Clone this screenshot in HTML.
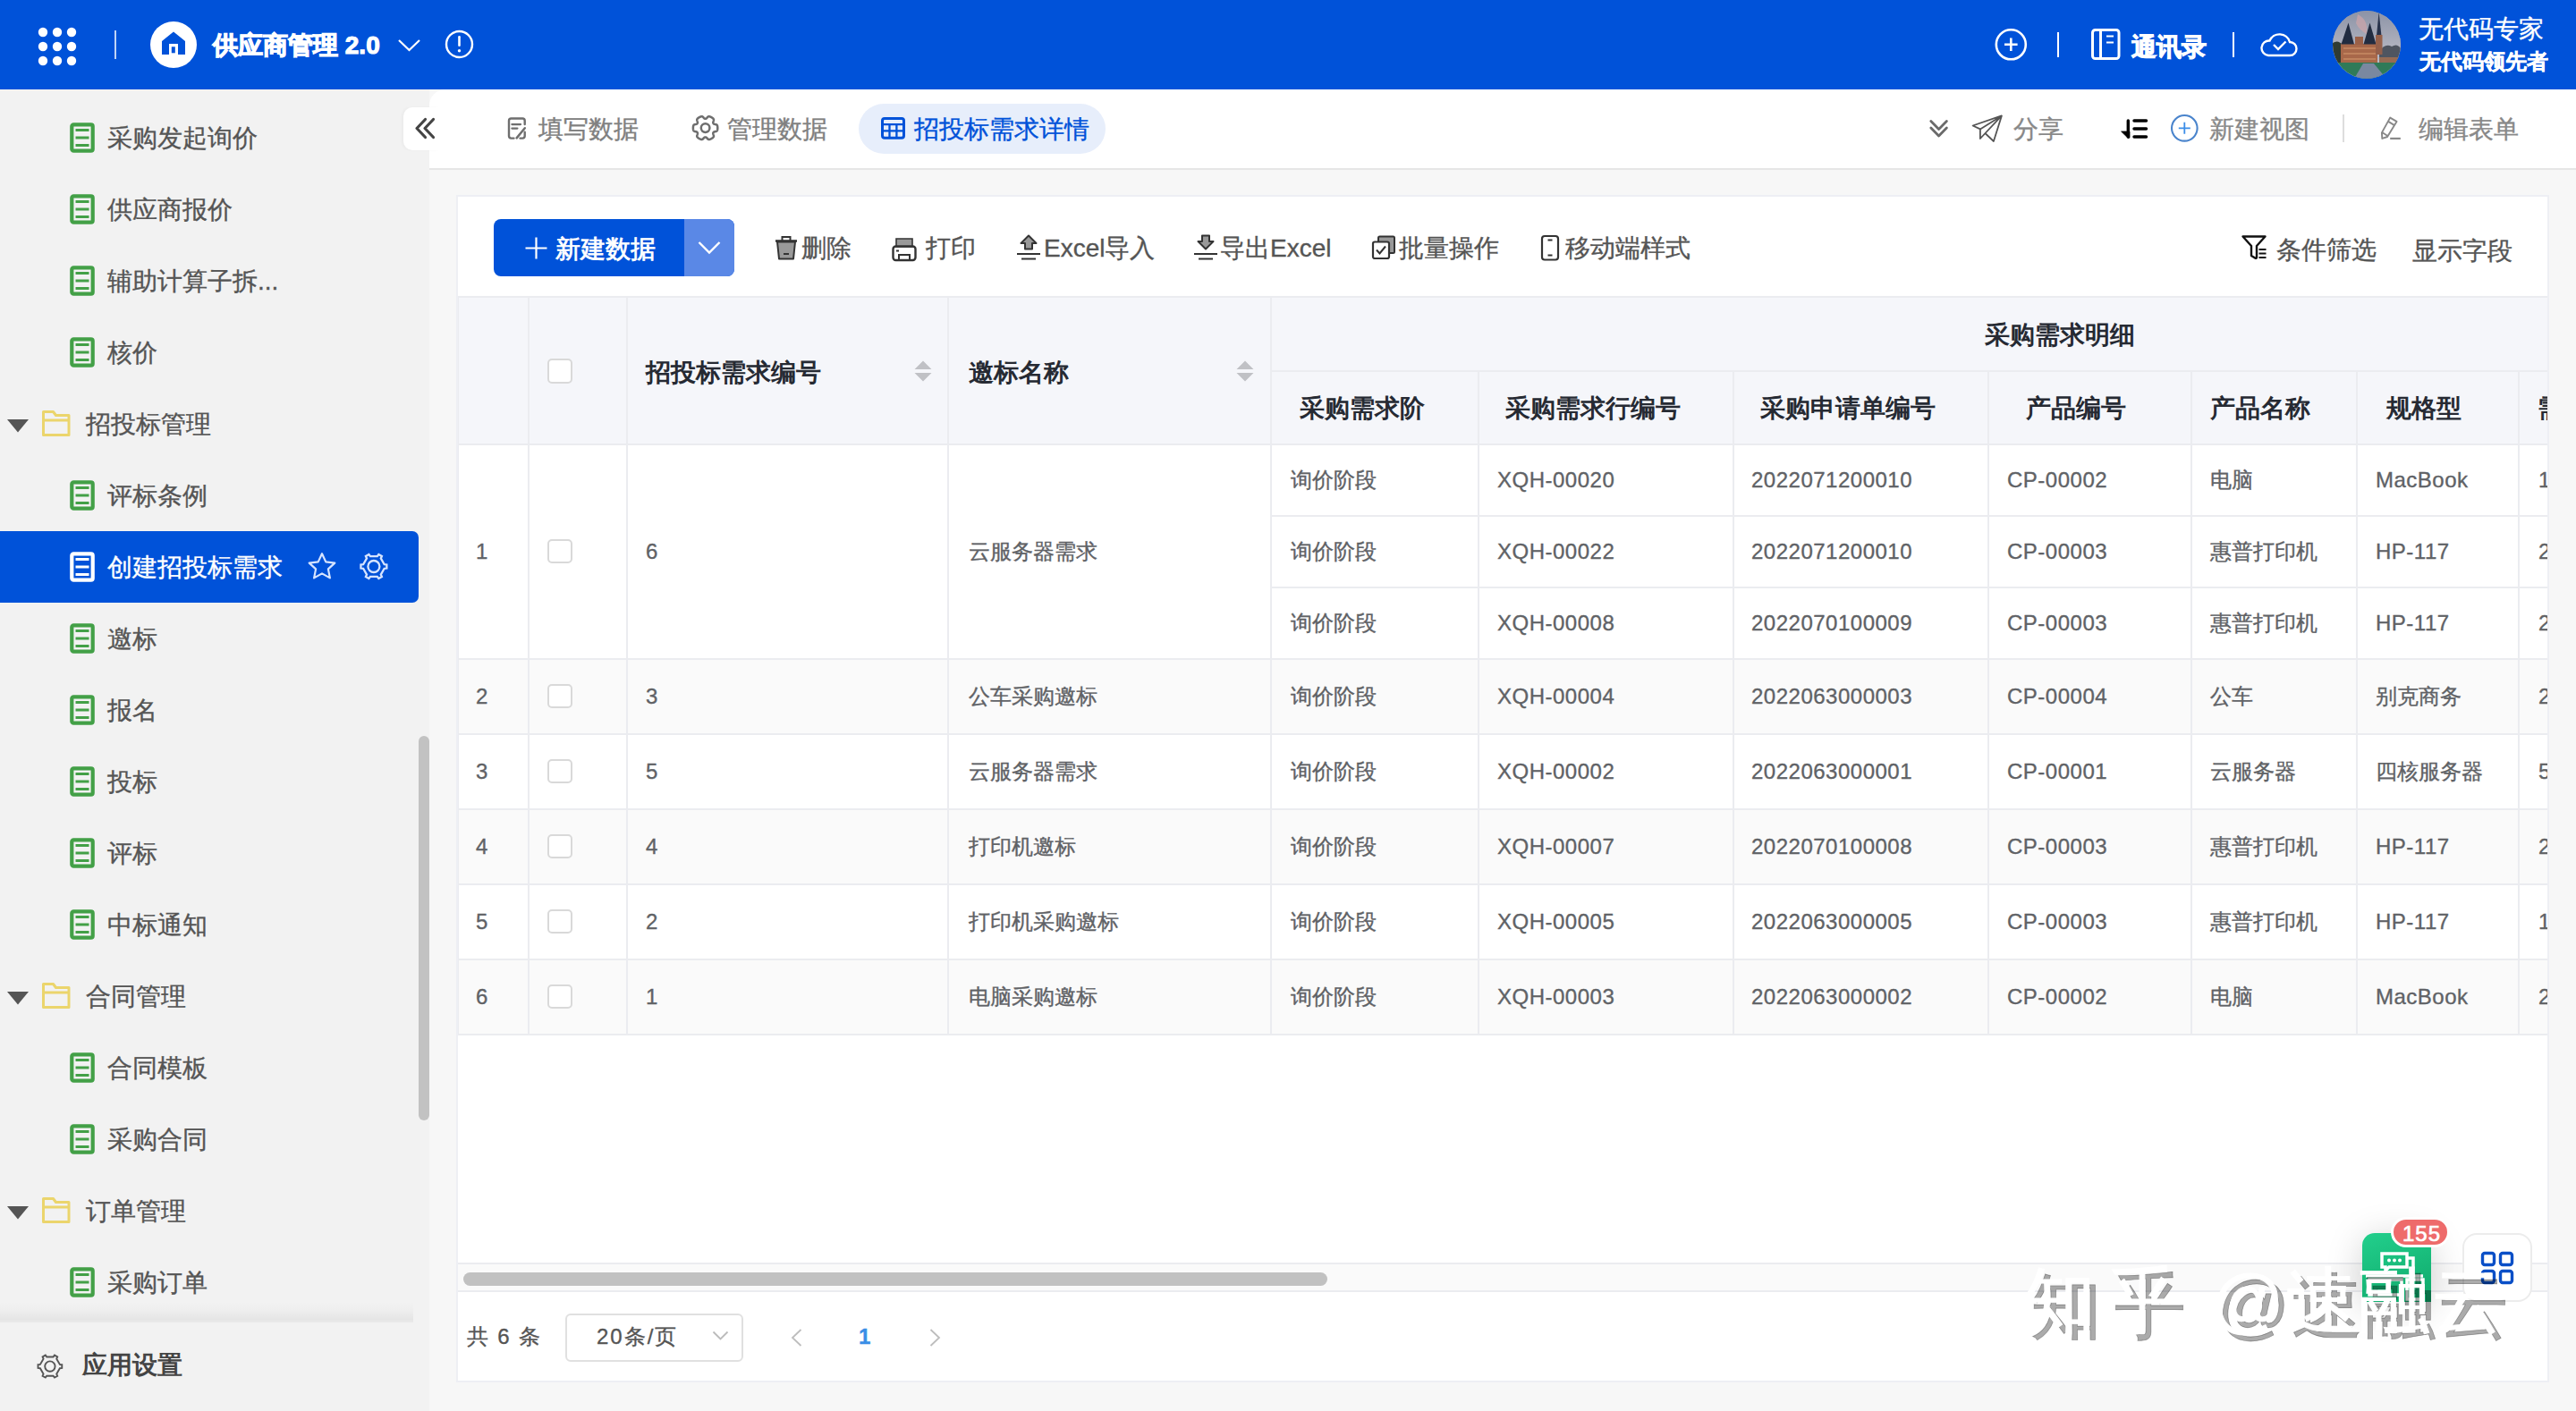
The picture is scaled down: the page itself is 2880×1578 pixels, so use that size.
<!DOCTYPE html>
<html><head><meta charset="utf-8">
<style>
*{box-sizing:border-box;margin:0;padding:0}
html,body{width:2880px;height:1578px;overflow:hidden}
body{position:relative;background:#f7f7f7;font-family:"Liberation Sans",sans-serif;color:#555}
.a{position:absolute}
.t{position:absolute;white-space:nowrap;line-height:1;-webkit-text-stroke-width:0.35px}
svg{position:absolute;overflow:visible}
#hdr{left:0;top:0;width:2880px;height:100px;background:#0052d9}
#side{left:0;top:100px;width:480px;height:1478px;background:#f2f2f2}
</style></head><body>
<div id="hdr" class="a">
<svg style="left:0;top:0" width="600" height="100" viewBox="0 0 600 100">
 <g fill="#fff">
  <circle cx="48" cy="36" r="5.2"/><circle cx="64" cy="36" r="5.2"/><circle cx="80" cy="36" r="5.2"/>
  <circle cx="48" cy="52" r="5.2"/><circle cx="64" cy="52" r="5.2"/><circle cx="80" cy="52" r="5.2"/>
  <circle cx="48" cy="68" r="5.2"/><circle cx="64" cy="68" r="5.2"/><circle cx="80" cy="68" r="5.2"/>
 </g>
 <rect x="128" y="34" width="2" height="32" fill="rgba(255,255,255,0.75)"/>
 <circle cx="194" cy="50" r="26" fill="#fff"/>
 <path d="M194 35.5 L207 46 V61 H199 V49 H189 V61 H181 V46 Z" fill="#0052d9"/>
 <rect x="191.8" y="52.3" width="4" height="7" fill="#0052d9"/>
 <path d="M446 45 L457.5 56 L469 45" fill="none" stroke="#fff" stroke-width="2.2"/>
 <circle cx="513.5" cy="49.5" r="14.5" fill="none" stroke="#fff" stroke-width="2.4"/>
 <rect x="512.2" y="40" width="2.6" height="12" rx="1.2" fill="#fff"/>
 <circle cx="513.5" cy="56.8" r="1.7" fill="#fff"/>
</svg>
<div class="t" style="left:238px;top:37px;font-size:28px;font-weight:bold;-webkit-text-stroke:1.1px #fff;color:#fff">供应商管理 2.0</div>
<svg style="left:2200px;top:0" width="400" height="100" viewBox="2200 0 400 100">
 <circle cx="2248.3" cy="49.8" r="16.5" fill="none" stroke="#fff" stroke-width="2.6"/>
 <path d="M2241 49.8 H2255.6 M2248.3 42.5 V57.1" stroke="#fff" stroke-width="2.6"/>
 <rect x="2300" y="36" width="2" height="28" fill="#fff"/>
 <rect x="2339.5" y="33.5" width="29.5" height="32" rx="3" fill="none" stroke="#fff" stroke-width="3"/>
 <path d="M2348.5 34 V65" stroke="#fff" stroke-width="3"/>
 <path d="M2355 40.5 H2363 M2355 47.5 H2363" stroke="#fff" stroke-width="2"/>
 <rect x="2496" y="36" width="2" height="28" fill="#fff"/>
 <path d="M2536 62 H2560 A7.5 7.5 0 0 0 2560 47 A12 12 0 0 0 2537.5 45.5 A8.2 8.2 0 0 0 2536 62 Z" fill="none" stroke="#fff" stroke-width="2.4"/>
 <path d="M2542 50 L2547 55 L2555.5 46.5" fill="none" stroke="#fff" stroke-width="2.4"/>
</svg>
<div class="t" style="left:2383px;top:39px;font-size:28px;font-weight:bold;-webkit-text-stroke:1px #fff;color:#fff">通讯录</div>
<div class="a" style="left:2608px;top:12px;width:76px;height:76px;border-radius:50%;overflow:hidden;background:#9aa2b4">
 <svg style="left:0;top:0" width="76" height="76" viewBox="0 0 76 76">
  <defs><linearGradient id="sky" x1="0" y1="0" x2="0" y2="1"><stop offset="0" stop-color="#8c93a6"/><stop offset="0.5" stop-color="#aeb0bd"/><stop offset="1" stop-color="#c4c3cc"/></linearGradient></defs>
  <rect width="76" height="76" fill="url(#sky)"/>
  <path d="M28 4 Q40 10 38 26 Q30 22 26 14 Z" fill="#c7a4aa" opacity="0.8"/>
  <path d="M0 36 Q6 32 11 38 L12 58 L0 58 Z" fill="#2f3b33"/>
  <path d="M52 46 Q58 36 66 40 Q72 36 76 42 L76 60 L52 60 Z" fill="#4f5560"/>
  <rect x="9" y="37" width="41" height="24" fill="#a8694a"/>
  <rect x="25" y="29" width="9" height="9" fill="#9a6048"/>
  <path d="M9.5 37.5 L17.5 13.5 L24 37.5 Z" fill="#222c40"/>
  <path d="M34.5 37.5 L41.5 13.5 L48.5 37.5 Z" fill="#222c40"/>
  <path d="M49 28 L51.6 1.5 L54.5 28 Z" fill="#27324a"/>
  <rect x="48" y="27" width="7.5" height="22" fill="#95604a"/>
  <path d="M12 42 H48 M12 48 H48 M12 54 H48" stroke="#d49a70" stroke-width="1.6" opacity="0.7"/>
  <rect x="52" y="52" width="24" height="8" fill="#a87050" opacity="0.8"/>
  <rect x="0" y="58" width="76" height="18" fill="#2f7a58"/>
  <path d="M24 76 L34 59 L46 59 L60 76 Z" fill="#7a88a0"/>
 </svg>
</div>
<div class="t" style="left:2704px;top:19px;font-size:28px;color:#fff">无代码专家</div>
<div class="t" style="left:2705px;top:57px;font-size:24px;font-weight:bold;-webkit-text-stroke:0.4px #fff;color:#fff">无代码领先者</div>
</div>
<div id="side" class="a">
<svg style="left:78px;top:37.0px" width="28" height="34" viewBox="0 0 28 34"><rect x="2.3" y="2.3" width="23.4" height="29.4" rx="2" fill="none" stroke="#43a047" stroke-width="4.2"/><path d="M6.5 8.6 H21.5 M6.5 17 H21.5 M6.5 25.4 H21.5" stroke="#43a047" stroke-width="3"/></svg>
<div class="t" style="left:120px;top:40.5px;font-size:28px;color:#555">采购发起询价</div>
<svg style="left:78px;top:117.0px" width="28" height="34" viewBox="0 0 28 34"><rect x="2.3" y="2.3" width="23.4" height="29.4" rx="2" fill="none" stroke="#43a047" stroke-width="4.2"/><path d="M6.5 8.6 H21.5 M6.5 17 H21.5 M6.5 25.4 H21.5" stroke="#43a047" stroke-width="3"/></svg>
<div class="t" style="left:120px;top:120.5px;font-size:28px;color:#555">供应商报价</div>
<svg style="left:78px;top:197.0px" width="28" height="34" viewBox="0 0 28 34"><rect x="2.3" y="2.3" width="23.4" height="29.4" rx="2" fill="none" stroke="#43a047" stroke-width="4.2"/><path d="M6.5 8.6 H21.5 M6.5 17 H21.5 M6.5 25.4 H21.5" stroke="#43a047" stroke-width="3"/></svg>
<div class="t" style="left:120px;top:200.5px;font-size:28px;color:#555">辅助计算子拆...</div>
<svg style="left:78px;top:277.0px" width="28" height="34" viewBox="0 0 28 34"><rect x="2.3" y="2.3" width="23.4" height="29.4" rx="2" fill="none" stroke="#43a047" stroke-width="4.2"/><path d="M6.5 8.6 H21.5 M6.5 17 H21.5 M6.5 25.4 H21.5" stroke="#43a047" stroke-width="3"/></svg>
<div class="t" style="left:120px;top:280.5px;font-size:28px;color:#555">核价</div>
<svg style="left:8px;top:369.0px" width="24" height="15" viewBox="0 0 24 15"><path d="M0 0 H24 L12 14.5 Z" fill="#555"/></svg>
<svg style="left:46px;top:357.5px" width="34" height="32" viewBox="0 0 34 32"><path d="M2.5 2.5 H13.5 L16.5 6.5 H31 V28.5 H2.5 Z" fill="none" stroke="#ebd56c" stroke-width="3" stroke-linejoin="round"/><path d="M2.5 12 H31" stroke="#ebd56c" stroke-width="3"/></svg>
<div class="t" style="left:96px;top:360.5px;font-size:28px;color:#555">招投标管理</div>
<svg style="left:78px;top:437.0px" width="28" height="34" viewBox="0 0 28 34"><rect x="2.3" y="2.3" width="23.4" height="29.4" rx="2" fill="none" stroke="#43a047" stroke-width="4.2"/><path d="M6.5 8.6 H21.5 M6.5 17 H21.5 M6.5 25.4 H21.5" stroke="#43a047" stroke-width="3"/></svg>
<div class="t" style="left:120px;top:440.5px;font-size:28px;color:#555">评标条例</div>
<div class="a" style="left:0;top:494px;width:468px;height:80px;background:#0052d9;border-radius:0 7px 7px 0"></div>
<svg style="left:78px;top:517.0px" width="28" height="34" viewBox="0 0 28 34"><rect x="2.3" y="2.3" width="23.4" height="29.4" rx="2" fill="none" stroke="#fff" stroke-width="4.2"/><path d="M6.5 8.6 H21.5 M6.5 17 H21.5 M6.5 25.4 H21.5" stroke="#fff" stroke-width="3"/></svg>
<div class="t" style="left:120px;top:520.5px;font-size:28px;color:#fff">创建招投标需求</div>
<svg style="left:343px;top:517px" width="34" height="33" viewBox="0 0 34 33"><path d="M17 2.2 L21.3 11.4 L31.3 12.6 L23.9 19.4 L25.9 29.4 L17 24.4 L8.1 29.4 L10.1 19.4 L2.7 12.6 L12.7 11.4 Z" fill="none" stroke="#d6e4ff" stroke-width="2.2" stroke-linejoin="round"/></svg>
<svg style="left:400px;top:517px" width="35" height="34" viewBox="0 0 35 34"><path d="M29.68 14.21 L32.36 14.47 L32.36 18.53 L29.68 18.79 L25.77 25.56 L26.89 28.00 L23.37 30.04 L21.81 27.85 L13.99 27.85 L12.43 30.04 L8.91 28.00 L10.03 25.56 L6.12 18.79 L3.44 18.53 L3.44 14.47 L6.12 14.21 L10.03 7.44 L8.91 5.00 L12.43 2.96 L13.99 5.15 L21.81 5.15 L23.37 2.96 L26.89 5.00 L25.77 7.44 Z" fill="none" stroke="#d6e4ff" stroke-width="2.3" stroke-linejoin="miter"/><circle cx="17.9" cy="16.5" r="6.5" fill="none" stroke="#d6e4ff" stroke-width="2.3"/></svg>
<svg style="left:78px;top:597.0px" width="28" height="34" viewBox="0 0 28 34"><rect x="2.3" y="2.3" width="23.4" height="29.4" rx="2" fill="none" stroke="#43a047" stroke-width="4.2"/><path d="M6.5 8.6 H21.5 M6.5 17 H21.5 M6.5 25.4 H21.5" stroke="#43a047" stroke-width="3"/></svg>
<div class="t" style="left:120px;top:600.5px;font-size:28px;color:#555">邀标</div>
<svg style="left:78px;top:677.0px" width="28" height="34" viewBox="0 0 28 34"><rect x="2.3" y="2.3" width="23.4" height="29.4" rx="2" fill="none" stroke="#43a047" stroke-width="4.2"/><path d="M6.5 8.6 H21.5 M6.5 17 H21.5 M6.5 25.4 H21.5" stroke="#43a047" stroke-width="3"/></svg>
<div class="t" style="left:120px;top:680.5px;font-size:28px;color:#555">报名</div>
<svg style="left:78px;top:757.0px" width="28" height="34" viewBox="0 0 28 34"><rect x="2.3" y="2.3" width="23.4" height="29.4" rx="2" fill="none" stroke="#43a047" stroke-width="4.2"/><path d="M6.5 8.6 H21.5 M6.5 17 H21.5 M6.5 25.4 H21.5" stroke="#43a047" stroke-width="3"/></svg>
<div class="t" style="left:120px;top:760.5px;font-size:28px;color:#555">投标</div>
<svg style="left:78px;top:837.0px" width="28" height="34" viewBox="0 0 28 34"><rect x="2.3" y="2.3" width="23.4" height="29.4" rx="2" fill="none" stroke="#43a047" stroke-width="4.2"/><path d="M6.5 8.6 H21.5 M6.5 17 H21.5 M6.5 25.4 H21.5" stroke="#43a047" stroke-width="3"/></svg>
<div class="t" style="left:120px;top:840.5px;font-size:28px;color:#555">评标</div>
<svg style="left:78px;top:917.0px" width="28" height="34" viewBox="0 0 28 34"><rect x="2.3" y="2.3" width="23.4" height="29.4" rx="2" fill="none" stroke="#43a047" stroke-width="4.2"/><path d="M6.5 8.6 H21.5 M6.5 17 H21.5 M6.5 25.4 H21.5" stroke="#43a047" stroke-width="3"/></svg>
<div class="t" style="left:120px;top:920.5px;font-size:28px;color:#555">中标通知</div>
<svg style="left:8px;top:1009.0px" width="24" height="15" viewBox="0 0 24 15"><path d="M0 0 H24 L12 14.5 Z" fill="#555"/></svg>
<svg style="left:46px;top:997.5px" width="34" height="32" viewBox="0 0 34 32"><path d="M2.5 2.5 H13.5 L16.5 6.5 H31 V28.5 H2.5 Z" fill="none" stroke="#ebd56c" stroke-width="3" stroke-linejoin="round"/><path d="M2.5 12 H31" stroke="#ebd56c" stroke-width="3"/></svg>
<div class="t" style="left:96px;top:1000.5px;font-size:28px;color:#555">合同管理</div>
<svg style="left:78px;top:1077.0px" width="28" height="34" viewBox="0 0 28 34"><rect x="2.3" y="2.3" width="23.4" height="29.4" rx="2" fill="none" stroke="#43a047" stroke-width="4.2"/><path d="M6.5 8.6 H21.5 M6.5 17 H21.5 M6.5 25.4 H21.5" stroke="#43a047" stroke-width="3"/></svg>
<div class="t" style="left:120px;top:1080.5px;font-size:28px;color:#555">合同模板</div>
<svg style="left:78px;top:1157.0px" width="28" height="34" viewBox="0 0 28 34"><rect x="2.3" y="2.3" width="23.4" height="29.4" rx="2" fill="none" stroke="#43a047" stroke-width="4.2"/><path d="M6.5 8.6 H21.5 M6.5 17 H21.5 M6.5 25.4 H21.5" stroke="#43a047" stroke-width="3"/></svg>
<div class="t" style="left:120px;top:1160.5px;font-size:28px;color:#555">采购合同</div>
<svg style="left:8px;top:1249.0px" width="24" height="15" viewBox="0 0 24 15"><path d="M0 0 H24 L12 14.5 Z" fill="#555"/></svg>
<svg style="left:46px;top:1237.5px" width="34" height="32" viewBox="0 0 34 32"><path d="M2.5 2.5 H13.5 L16.5 6.5 H31 V28.5 H2.5 Z" fill="none" stroke="#ebd56c" stroke-width="3" stroke-linejoin="round"/><path d="M2.5 12 H31" stroke="#ebd56c" stroke-width="3"/></svg>
<div class="t" style="left:96px;top:1240.5px;font-size:28px;color:#555">订单管理</div>
<svg style="left:78px;top:1317.0px" width="28" height="34" viewBox="0 0 28 34"><rect x="2.3" y="2.3" width="23.4" height="29.4" rx="2" fill="none" stroke="#43a047" stroke-width="4.2"/><path d="M6.5 8.6 H21.5 M6.5 17 H21.5 M6.5 25.4 H21.5" stroke="#43a047" stroke-width="3"/></svg>
<div class="t" style="left:120px;top:1320.5px;font-size:28px;color:#555">采购订单</div>
<div class="a" style="left:468px;top:723px;width:12px;height:430px;background:#c2c2c2;border-radius:6px"></div>
<div class="a" style="left:0;top:1356px;width:462px;height:23px;background:linear-gradient(180deg,rgba(0,0,0,0) 0%,rgba(0,0,0,0.015) 40%,rgba(0,0,0,0.055) 85%,rgba(0,0,0,0.03) 100%)"></div>
<svg style="left:40px;top:1413px" width="32" height="30" viewBox="0 0 32 30"><path d="M26.89 12.96 L29.27 13.22 L29.27 16.98 L26.89 17.24 L23.25 23.55 L24.21 25.74 L20.96 27.62 L19.55 25.69 L12.25 25.69 L10.84 27.62 L7.59 25.74 L8.55 23.55 L4.91 17.24 L2.53 16.98 L2.53 13.22 L4.91 12.96 L8.55 6.65 L7.59 4.46 L10.84 2.58 L12.25 4.51 L19.55 4.51 L20.96 2.58 L24.21 4.46 L23.25 6.65 Z" fill="none" stroke="#555" stroke-width="1.9" stroke-linejoin="miter"/><circle cx="15.9" cy="15.1" r="5.7" fill="none" stroke="#555" stroke-width="1.9"/></svg>
<div class="t" style="left:92px;top:1413px;font-size:28px;font-weight:bold;color:#444;-webkit-text-stroke-width:0">应用设置</div>
</div>

<div class="a" style="left:480px;top:100px;width:2400px;height:90px;background:#fff;border-bottom:2px solid #e6e6e6;border-top-left-radius:18px"></div>
<div class="a" style="left:451px;top:120px;width:40px;height:48px;background:#fff;border-radius:10px 0 0 10px;box-shadow:-2px 0 3px rgba(0,0,0,0.03)"></div>
<svg style="left:460px;top:128px" width="32" height="32" viewBox="0 0 32 32"><path d="M15.5 5.5 L6 15.5 L15.5 25.5 M24.5 5.5 L15 15.5 L24.5 25.5" fill="none" stroke="#444" stroke-width="3.2" stroke-linecap="round" stroke-linejoin="round"/></svg>
<!-- tabs -->
<svg style="left:566px;top:129px" width="26" height="30" viewBox="0 0 26 30"><path d="M20.7 10 V6 Q20.7 3.5 18.2 3.5 H5.5 Q3 3.5 3 6 V23.1 Q3 25.6 5.5 25.6 H8.5 M15.5 25.6 H18.2 Q20.7 25.6 20.7 23.1 V18.7" fill="none" stroke="#6e6e6e" stroke-width="2.4" stroke-linecap="round"/><path d="M6.4 10.1 H16 M6.4 14.6 H12.4" stroke="#6e6e6e" stroke-width="2.3" stroke-linecap="round"/><path d="M11.6 25.4 L20.8 14.2" stroke="#6e6e6e" stroke-width="2.5" stroke-linecap="round"/></svg>
<div class="t" style="left:602px;top:131px;font-size:28px;color:#808080">填写数据</div>
<svg style="left:772px;top:127px" width="33" height="33" viewBox="0 0 33 33"><path d="M30.30 16.10 L30.29 16.46 L30.28 16.82 L30.25 17.17 L30.21 17.53 L30.16 17.89 L30.09 18.24 L30.00 18.58 L29.87 18.92 L29.68 19.24 L29.40 19.53 L29.00 19.77 L28.47 19.96 L27.87 20.09 L27.28 20.20 L26.78 20.32 L26.38 20.46 L26.08 20.62 L25.85 20.82 L25.67 21.02 L25.52 21.25 L25.40 21.49 L25.31 21.76 L25.26 22.05 L25.26 22.40 L25.34 22.81 L25.49 23.30 L25.69 23.86 L25.87 24.45 L25.98 25.00 L25.97 25.47 L25.86 25.86 L25.68 26.18 L25.45 26.46 L25.20 26.72 L24.93 26.95 L24.65 27.17 L24.36 27.39 L24.06 27.59 L23.76 27.78 L23.45 27.96 L23.14 28.14 L22.82 28.30 L22.50 28.46 L22.17 28.61 L21.83 28.74 L21.50 28.85 L21.15 28.94 L20.79 29.00 L20.42 28.99 L20.03 28.90 L19.62 28.67 L19.19 28.31 L18.78 27.85 L18.39 27.40 L18.04 27.02 L17.72 26.75 L17.42 26.58 L17.14 26.47 L16.87 26.42 L16.60 26.40 L16.33 26.42 L16.06 26.47 L15.78 26.58 L15.48 26.75 L15.16 27.02 L14.81 27.40 L14.42 27.85 L14.01 28.31 L13.58 28.67 L13.17 28.90 L12.78 28.99 L12.41 29.00 L12.05 28.94 L11.70 28.85 L11.37 28.74 L11.03 28.61 L10.70 28.46 L10.38 28.30 L10.06 28.14 L9.75 27.96 L9.44 27.78 L9.14 27.59 L8.84 27.39 L8.55 27.17 L8.27 26.95 L8.00 26.72 L7.75 26.46 L7.52 26.18 L7.34 25.86 L7.23 25.47 L7.22 25.00 L7.33 24.45 L7.51 23.86 L7.71 23.30 L7.86 22.81 L7.94 22.40 L7.94 22.05 L7.89 21.76 L7.80 21.49 L7.68 21.25 L7.53 21.02 L7.35 20.82 L7.12 20.62 L6.82 20.46 L6.42 20.32 L5.92 20.20 L5.33 20.09 L4.73 19.96 L4.20 19.77 L3.80 19.53 L3.52 19.24 L3.33 18.92 L3.20 18.58 L3.11 18.24 L3.04 17.89 L2.99 17.53 L2.95 17.17 L2.92 16.82 L2.91 16.46 L2.90 16.10 L2.91 15.74 L2.92 15.38 L2.95 15.03 L2.99 14.67 L3.04 14.31 L3.11 13.96 L3.20 13.62 L3.33 13.28 L3.52 12.96 L3.80 12.67 L4.20 12.43 L4.73 12.24 L5.33 12.11 L5.92 12.00 L6.42 11.88 L6.82 11.74 L7.12 11.58 L7.35 11.38 L7.53 11.18 L7.68 10.95 L7.80 10.71 L7.89 10.44 L7.94 10.15 L7.94 9.80 L7.86 9.39 L7.71 8.90 L7.51 8.34 L7.33 7.75 L7.22 7.20 L7.23 6.73 L7.34 6.34 L7.52 6.02 L7.75 5.74 L8.00 5.48 L8.27 5.25 L8.55 5.03 L8.84 4.81 L9.14 4.61 L9.44 4.42 L9.75 4.24 L10.06 4.06 L10.38 3.90 L10.70 3.74 L11.03 3.59 L11.37 3.46 L11.70 3.35 L12.05 3.26 L12.41 3.20 L12.78 3.21 L13.17 3.30 L13.58 3.53 L14.01 3.89 L14.42 4.35 L14.81 4.80 L15.16 5.18 L15.48 5.45 L15.78 5.62 L16.06 5.73 L16.33 5.78 L16.60 5.80 L16.87 5.78 L17.14 5.73 L17.42 5.62 L17.72 5.45 L18.04 5.18 L18.39 4.80 L18.78 4.35 L19.19 3.89 L19.62 3.53 L20.03 3.30 L20.42 3.21 L20.79 3.20 L21.15 3.26 L21.50 3.35 L21.83 3.46 L22.17 3.59 L22.50 3.74 L22.82 3.90 L23.14 4.06 L23.45 4.24 L23.76 4.42 L24.06 4.61 L24.36 4.81 L24.65 5.03 L24.93 5.25 L25.20 5.48 L25.45 5.74 L25.68 6.02 L25.86 6.34 L25.97 6.73 L25.98 7.20 L25.87 7.75 L25.69 8.34 L25.49 8.90 L25.34 9.39 L25.26 9.80 L25.26 10.15 L25.31 10.44 L25.40 10.71 L25.52 10.95 L25.67 11.18 L25.85 11.38 L26.08 11.58 L26.38 11.74 L26.78 11.88 L27.28 12.00 L27.87 12.11 L28.47 12.24 L29.00 12.43 L29.40 12.67 L29.68 12.96 L29.87 13.28 L30.00 13.62 L30.09 13.96 L30.16 14.31 L30.21 14.67 L30.25 15.03 L30.28 15.38 L30.29 15.74 Z" fill="none" stroke="#6e6e6e" stroke-width="2.5" stroke-linejoin="round"/><circle cx="16.6" cy="16.1" r="4.8" fill="none" stroke="#6e6e6e" stroke-width="2.5"/></svg>
<div class="t" style="left:813px;top:131px;font-size:28px;color:#808080">管理数据</div>
<div class="a" style="left:960px;top:116px;width:276px;height:56px;background:#e7eefb;border-radius:28px"></div>
<svg style="left:984px;top:130px" width="30" height="27" viewBox="0 0 30 27"><rect x="2.5" y="2.5" width="24" height="21.8" rx="2.5" fill="none" stroke="#0052d9" stroke-width="3"/><path d="M2.5 9.2 H26.5 M2.5 16.4 H26.5 M10.5 9 V24 M18.4 9 V24" stroke="#0052d9" stroke-width="2.3"/></svg>
<div class="t" style="left:1022px;top:131px;font-size:28px;color:#0052d9">招投标需求详情</div>

<svg style="left:2154px;top:131px" width="28" height="26" viewBox="0 0 28 26"><path d="M4.8 4.6 L13.6 13.6 L22.4 4.6 M4.8 12.1 L13.6 21.1 L22.4 12.1" fill="none" stroke="#6a6a6a" stroke-width="2.8" stroke-linecap="round" stroke-linejoin="round"/></svg>
<svg style="left:2204px;top:127px" width="36" height="33" viewBox="0 0 36 33"><path d="M33.9 2.4 L1.6 13.5 L9.9 17.4 Z M9.9 17.4 L9.9 28 L33.9 2.4 M15.9 22.5 L24.9 31 L33.9 2.4" fill="none" stroke="#555" stroke-width="1.8" stroke-linejoin="round"/></svg>
<div class="t" style="left:2251px;top:131px;font-size:28px;color:#888">分享</div>
<svg style="left:2368px;top:130px" width="36" height="28" viewBox="0 0 36 28"><path d="M11.3 5 V23" stroke="#000" stroke-width="3.4" stroke-linecap="round"/><path d="M3.6 17 L13 17 L13 23.5 Q12.6 25 11 24.3 Z" fill="#000" stroke="#000" stroke-width="0.8" stroke-linejoin="round"/><path d="M18 5 H31.5 M18 14 H31.5 M18 23 H31.5" stroke="#000" stroke-width="3.5" stroke-linecap="round"/></svg>
<svg style="left:2425px;top:126px" width="36" height="36" viewBox="0 0 36 36"><circle cx="17.3" cy="17.3" r="14.3" fill="none" stroke="#4a84cc" stroke-width="2.1"/><path d="M10.8 17.3 H23.8 M17.3 10.8 V23.8" stroke="#3b8de8" stroke-width="1.8"/></svg>
<div class="t" style="left:2470px;top:131px;font-size:28px;color:#888">新建视图</div>
<div class="a" style="left:2619px;top:128px;width:2px;height:31px;background:#ddd"></div>
<svg style="left:2659px;top:129px" width="28" height="30" viewBox="0 0 28 30"><path d="M13.2 2.6 L20.5 6.9 L10.1 24 L4.3 25.9 L3.9 19.4 Z M11.6 7.1 L17.2 10.6 M4.6 19.3 L10 22.8" fill="none" stroke="#888" stroke-width="1.9" stroke-linejoin="round"/><path d="M13.2 25.9 H24.8" stroke="#888" stroke-width="2.2"/></svg>
<div class="t" style="left:2704px;top:131px;font-size:28px;color:#888">编辑表单</div>

<!-- card -->
<div id="card" class="a" style="left:510px;top:218px;width:2340px;height:1328px;background:#fff;overflow:hidden"><div class="a" style="left:42.0px;top:27.0px;width:269.0px;height:64.0px;background:#0052d9;border-radius:8px"></div>
<div class="a" style="left:255.0px;top:27.0px;width:56.0px;height:64.0px;background:#5a88e6;border-radius:0 8px 8px 0"></div>
<svg style="left:76.0px;top:46.0px" width="27" height="27" viewBox="0 0 27 27"><path d="M13.5 1.5 V25.5 M1.5 13.5 H25.5" stroke="#fff" stroke-width="2.2"/></svg>
<div class="t" style="left:111.0px;top:46.5px;font-size:28px;color:#fff;-webkit-text-stroke:0.8px #fff">新建数据</div>
<svg style="left:269.0px;top:50.0px" width="28" height="18" viewBox="0 0 28 18"><path d="M2.5 3 L14 14.5 L25.5 3" fill="none" stroke="#fff" stroke-width="2.4"/></svg>
<svg style="left:354.0px;top:44.0px" width="30" height="30" viewBox="0 0 30 30"><path d="M5 8.5 H25 L23 27.5 H7 Z" fill="#999" stroke="#333" stroke-width="2" stroke-linejoin="round"/><path d="M3 7.5 H27" stroke="#333" stroke-width="2.6"/><path d="M10.5 7 V3 H19.5 V7" fill="none" stroke="#333" stroke-width="2"/><path d="M12 22 H18" stroke="#333" stroke-width="2"/></svg>
<div class="t" style="left:386.0px;top:46.0px;font-size:28px;color:#555">删除</div>
<svg style="left:486.0px;top:46.0px" width="30" height="30" viewBox="0 0 30 30"><path d="M6 12 V3 H24 V12 Z" fill="#999" stroke="#333" stroke-width="1.6"/><rect x="2.5" y="11.5" width="25" height="15.5" rx="3" fill="none" stroke="#333" stroke-width="2.4"/><path d="M9 27 V21 H21 V27" fill="none" stroke="#333" stroke-width="2"/><path d="M6 16.5 H9" stroke="#333" stroke-width="2"/></svg>
<div class="t" style="left:525.0px;top:46.0px;font-size:28px;color:#555">打印</div>
<svg style="left:626.0px;top:43.0px" width="28" height="32" viewBox="0 0 28 32"><path d="M14 2.5 L22.5 11 H18 V17.5 H10 V11 H5.5 Z" fill="#999" stroke="#333" stroke-width="2" stroke-linejoin="round"/><path d="M1 23 H27 M6 28.5 H22" stroke="#333" stroke-width="2"/></svg>
<div class="t" style="left:657.0px;top:46.0px;font-size:28px;color:#555">Excel导入</div>
<svg style="left:824.0px;top:43.0px" width="28" height="32" viewBox="0 0 28 32"><path d="M14 17.5 L22.5 9 H18 V2.5 H10 V9 H5.5 Z" fill="#999" stroke="#333" stroke-width="2" stroke-linejoin="round"/><path d="M1 23 H27 M6 28.5 H22" stroke="#333" stroke-width="2"/></svg>
<div class="t" style="left:854.0px;top:46.0px;font-size:28px;color:#555">导出Excel</div>
<svg style="left:1023.0px;top:45.0px" width="28" height="28" viewBox="0 0 28 28"><path d="M8 7 V3 Q8 1.5 9.5 1.5 H24.5 Q26 1.5 26 3 V18.5 Q26 20 24.5 20 H20" fill="#999" stroke="#333" stroke-width="2"/><path d="M9 7 H20 V20 H9 Z" fill="#999"/><rect x="2" y="7.5" width="18" height="18.5" rx="2" fill="#fff" stroke="#333" stroke-width="2.2"/><path d="M6 16.5 L9.5 20.5 L16 12.5" fill="none" stroke="#333" stroke-width="2"/></svg>
<div class="t" style="left:1054.0px;top:46.0px;font-size:28px;color:#555">批量操作</div>
<svg style="left:1212.0px;top:44.0px" width="22" height="30" viewBox="0 0 22 30"><rect x="2" y="2" width="18" height="26.5" rx="3" fill="none" stroke="#333" stroke-width="2.2"/><path d="M8.5 6.5 H13.5 M8.5 23.5 H13.5" stroke="#333" stroke-width="2"/></svg>
<div class="t" style="left:1240.0px;top:46.0px;font-size:28px;color:#555">移动端样式</div>
<svg style="left:1995.0px;top:43.0px" width="32" height="32" viewBox="0 0 32 32"><path d="M2.5 3.5 H27.5 L18 14 V26.5 Q18 28.5 16.2 27.6 L12 25 V14 Z" fill="none" stroke="#111" stroke-width="2.4" stroke-linejoin="round"/><path d="M20.5 18 H28.5 M20.5 22.5 H28.5 M20.5 27 H28.5" stroke="#111" stroke-width="1.8"/></svg>
<div class="t" style="left:2035.0px;top:48.0px;font-size:28px;color:#555">条件筛选</div>
<div class="t" style="left:2187.0px;top:49.0px;font-size:28px;color:#555">显示字段</div>
<div class="a" style="left:2.0px;top:114.0px;width:2336.0px;height:165.0px;background:#f5f6fa"></div>
<div class="a" style="left:2.0px;top:519.0px;width:2336.0px;height:84.0px;background:#fafafa"></div>
<div class="a" style="left:2.0px;top:687.0px;width:2336.0px;height:84.0px;background:#fafafa"></div>
<div class="a" style="left:2.0px;top:855.0px;width:2336.0px;height:84.0px;background:#fafafa"></div>
<div class="a" style="left:2.0px;top:113.0px;width:2336.0px;height:2.0px;background:#ebecf0"></div>
<div class="a" style="left:911.0px;top:196.0px;width:1427.0px;height:2.0px;background:#ebecf0"></div>
<div class="a" style="left:2.0px;top:278.0px;width:2336.0px;height:2.0px;background:#ebecf0"></div>
<div class="a" style="left:911.0px;top:357.5px;width:1427.0px;height:2.0px;background:#ebecf0"></div>
<div class="a" style="left:911.0px;top:437.5px;width:1427.0px;height:2.0px;background:#ebecf0"></div>
<div class="a" style="left:2.0px;top:518.0px;width:2336.0px;height:2.0px;background:#ebecf0"></div>
<div class="a" style="left:2.0px;top:602.0px;width:2336.0px;height:2.0px;background:#ebecf0"></div>
<div class="a" style="left:2.0px;top:686.0px;width:2336.0px;height:2.0px;background:#ebecf0"></div>
<div class="a" style="left:2.0px;top:770.0px;width:2336.0px;height:2.0px;background:#ebecf0"></div>
<div class="a" style="left:2.0px;top:854.0px;width:2336.0px;height:2.0px;background:#ebecf0"></div>
<div class="a" style="left:2.0px;top:938.0px;width:2336.0px;height:2.0px;background:#ebecf0"></div>
<div class="a" style="left:80.0px;top:114.0px;width:2.0px;height:824.0px;background:#ebecf0"></div>
<div class="a" style="left:190.0px;top:114.0px;width:2.0px;height:824.0px;background:#ebecf0"></div>
<div class="a" style="left:549.0px;top:114.0px;width:2.0px;height:824.0px;background:#ebecf0"></div>
<div class="a" style="left:910.0px;top:114.0px;width:2.0px;height:824.0px;background:#ebecf0"></div>
<div class="a" style="left:1142.0px;top:197.0px;width:2.0px;height:741.0px;background:#ebecf0"></div>
<div class="a" style="left:1427.0px;top:197.0px;width:2.0px;height:741.0px;background:#ebecf0"></div>
<div class="a" style="left:1712.0px;top:197.0px;width:2.0px;height:741.0px;background:#ebecf0"></div>
<div class="a" style="left:1939.0px;top:197.0px;width:2.0px;height:741.0px;background:#ebecf0"></div>
<div class="a" style="left:2124.0px;top:197.0px;width:2.0px;height:741.0px;background:#ebecf0"></div>
<div class="a" style="left:2305.0px;top:197.0px;width:2.0px;height:741.0px;background:#ebecf0"></div>
<div class="a" style="left:1.0px;top:114.0px;width:2.0px;height:824.0px;background:#ebecf0"></div>
<div class="a" style="left:102.0px;top:183.0px;width:27.5px;height:27.5px;background:#fff;border:2px solid #d9d9d9;border-radius:5px"></div>
<div class="t" style="left:212.0px;top:184.5px;font-size:28px;font-weight:bold;color:#262a33;-webkit-text-stroke-width:0">招投标需求编号</div>
<div class="t" style="left:573.0px;top:184.5px;font-size:28px;font-weight:bold;color:#262a33;-webkit-text-stroke-width:0">邀标名称</div>
<svg style="left:512.0px;top:185.0px" width="20" height="24" viewBox="0 0 20 24"><path d="M10 0.5 L19.5 10 H0.5 Z M10 23.5 L19.5 14 H0.5 Z" fill="#c0c1c5"/></svg>
<svg style="left:872.0px;top:185.0px" width="20" height="24" viewBox="0 0 20 24"><path d="M10 0.5 L19.5 10 H0.5 Z M10 23.5 L19.5 14 H0.5 Z" fill="#c0c1c5"/></svg>
<div class="t" style="left:1709.0px;top:142.5px;font-size:28px;font-weight:bold;color:#262a33;-webkit-text-stroke-width:0">采购需求明细</div>
<div class="t" style="left:943.0px;top:224.5px;font-size:28px;font-weight:bold;color:#262a33;-webkit-text-stroke-width:0">采购需求阶</div>
<div class="t" style="left:1173.0px;top:224.5px;font-size:28px;font-weight:bold;color:#262a33;-webkit-text-stroke-width:0">采购需求行编号</div>
<div class="t" style="left:1458.0px;top:224.5px;font-size:28px;font-weight:bold;color:#262a33;-webkit-text-stroke-width:0">采购申请单编号</div>
<div class="t" style="left:1755.0px;top:224.5px;font-size:28px;font-weight:bold;color:#262a33;-webkit-text-stroke-width:0">产品编号</div>
<div class="t" style="left:1961.0px;top:224.5px;font-size:28px;font-weight:bold;color:#262a33;-webkit-text-stroke-width:0">产品名称</div>
<div class="t" style="left:2158.0px;top:224.5px;font-size:28px;font-weight:bold;color:#262a33;-webkit-text-stroke-width:0">规格型</div>
<div class="t" style="left:2327.0px;top:224.5px;font-size:28px;font-weight:bold;color:#262a33;-webkit-text-stroke-width:0">需求数量</div>
<div class="t" style="left:933.0px;top:307.0px;font-size:24px;color:#606266">询价阶段</div>
<div class="t" style="left:1164.0px;top:307.0px;font-size:24px;color:#606266;letter-spacing:0.5px">XQH-00020</div>
<div class="t" style="left:1448.0px;top:307.0px;font-size:24px;color:#606266;letter-spacing:0.5px">2022071200010</div>
<div class="t" style="left:1734.0px;top:307.0px;font-size:24px;color:#606266;letter-spacing:0.5px">CP-00002</div>
<div class="t" style="left:1961.0px;top:307.0px;font-size:24px;color:#606266">电脑</div>
<div class="t" style="left:2146.0px;top:307.0px;font-size:24px;color:#606266;letter-spacing:0.5px">MacBook</div>
<div class="t" style="left:2328.0px;top:307.0px;font-size:24px;color:#606266">1</div>
<div class="t" style="left:933.0px;top:387.0px;font-size:24px;color:#606266">询价阶段</div>
<div class="t" style="left:1164.0px;top:387.0px;font-size:24px;color:#606266;letter-spacing:0.5px">XQH-00022</div>
<div class="t" style="left:1448.0px;top:387.0px;font-size:24px;color:#606266;letter-spacing:0.5px">2022071200010</div>
<div class="t" style="left:1734.0px;top:387.0px;font-size:24px;color:#606266;letter-spacing:0.5px">CP-00003</div>
<div class="t" style="left:1961.0px;top:387.0px;font-size:24px;color:#606266">惠普打印机</div>
<div class="t" style="left:2146.0px;top:387.0px;font-size:24px;color:#606266;letter-spacing:0.5px">HP-117</div>
<div class="t" style="left:2328.0px;top:387.0px;font-size:24px;color:#606266">2</div>
<div class="t" style="left:933.0px;top:467.0px;font-size:24px;color:#606266">询价阶段</div>
<div class="t" style="left:1164.0px;top:467.0px;font-size:24px;color:#606266;letter-spacing:0.5px">XQH-00008</div>
<div class="t" style="left:1448.0px;top:467.0px;font-size:24px;color:#606266;letter-spacing:0.5px">2022070100009</div>
<div class="t" style="left:1734.0px;top:467.0px;font-size:24px;color:#606266;letter-spacing:0.5px">CP-00003</div>
<div class="t" style="left:1961.0px;top:467.0px;font-size:24px;color:#606266">惠普打印机</div>
<div class="t" style="left:2146.0px;top:467.0px;font-size:24px;color:#606266;letter-spacing:0.5px">HP-117</div>
<div class="t" style="left:2328.0px;top:467.0px;font-size:24px;color:#606266">2</div>
<div class="a" style="left:102.0px;top:384.5px;width:27.5px;height:27.5px;background:#fff;border:2px solid #d9d9d9;border-radius:5px"></div>
<div class="t" style="left:22.0px;top:387.0px;font-size:24px;color:#606266">1</div>
<div class="t" style="left:212.0px;top:387.0px;font-size:24px;color:#606266">6</div>
<div class="t" style="left:573.0px;top:387.0px;font-size:24px;color:#606266">云服务器需求</div>
<div class="a" style="left:102.0px;top:546.5px;width:27.5px;height:27.5px;background:#fff;border:2px solid #d9d9d9;border-radius:5px"></div>
<div class="t" style="left:22.0px;top:548.5px;font-size:24px;color:#606266">2</div>
<div class="t" style="left:212.0px;top:548.5px;font-size:24px;color:#606266">3</div>
<div class="t" style="left:573.0px;top:548.5px;font-size:24px;color:#606266">公车采购邀标</div>
<div class="t" style="left:933.0px;top:548.5px;font-size:24px;color:#606266">询价阶段</div>
<div class="t" style="left:1164.0px;top:548.5px;font-size:24px;color:#606266;letter-spacing:0.5px">XQH-00004</div>
<div class="t" style="left:1448.0px;top:548.5px;font-size:24px;color:#606266;letter-spacing:0.5px">2022063000003</div>
<div class="t" style="left:1734.0px;top:548.5px;font-size:24px;color:#606266;letter-spacing:0.5px">CP-00004</div>
<div class="t" style="left:1961.0px;top:548.5px;font-size:24px;color:#606266">公车</div>
<div class="t" style="left:2146.0px;top:548.5px;font-size:24px;color:#606266">别克商务</div>
<div class="t" style="left:2328.0px;top:548.5px;font-size:24px;color:#606266">2</div>
<div class="a" style="left:102.0px;top:630.5px;width:27.5px;height:27.5px;background:#fff;border:2px solid #d9d9d9;border-radius:5px"></div>
<div class="t" style="left:22.0px;top:632.5px;font-size:24px;color:#606266">3</div>
<div class="t" style="left:212.0px;top:632.5px;font-size:24px;color:#606266">5</div>
<div class="t" style="left:573.0px;top:632.5px;font-size:24px;color:#606266">云服务器需求</div>
<div class="t" style="left:933.0px;top:632.5px;font-size:24px;color:#606266">询价阶段</div>
<div class="t" style="left:1164.0px;top:632.5px;font-size:24px;color:#606266;letter-spacing:0.5px">XQH-00002</div>
<div class="t" style="left:1448.0px;top:632.5px;font-size:24px;color:#606266;letter-spacing:0.5px">2022063000001</div>
<div class="t" style="left:1734.0px;top:632.5px;font-size:24px;color:#606266;letter-spacing:0.5px">CP-00001</div>
<div class="t" style="left:1961.0px;top:632.5px;font-size:24px;color:#606266">云服务器</div>
<div class="t" style="left:2146.0px;top:632.5px;font-size:24px;color:#606266">四核服务器</div>
<div class="t" style="left:2328.0px;top:632.5px;font-size:24px;color:#606266">5</div>
<div class="a" style="left:102.0px;top:714.5px;width:27.5px;height:27.5px;background:#fff;border:2px solid #d9d9d9;border-radius:5px"></div>
<div class="t" style="left:22.0px;top:716.5px;font-size:24px;color:#606266">4</div>
<div class="t" style="left:212.0px;top:716.5px;font-size:24px;color:#606266">4</div>
<div class="t" style="left:573.0px;top:716.5px;font-size:24px;color:#606266">打印机邀标</div>
<div class="t" style="left:933.0px;top:716.5px;font-size:24px;color:#606266">询价阶段</div>
<div class="t" style="left:1164.0px;top:716.5px;font-size:24px;color:#606266;letter-spacing:0.5px">XQH-00007</div>
<div class="t" style="left:1448.0px;top:716.5px;font-size:24px;color:#606266;letter-spacing:0.5px">2022070100008</div>
<div class="t" style="left:1734.0px;top:716.5px;font-size:24px;color:#606266;letter-spacing:0.5px">CP-00003</div>
<div class="t" style="left:1961.0px;top:716.5px;font-size:24px;color:#606266">惠普打印机</div>
<div class="t" style="left:2146.0px;top:716.5px;font-size:24px;color:#606266;letter-spacing:0.5px">HP-117</div>
<div class="t" style="left:2328.0px;top:716.5px;font-size:24px;color:#606266">2</div>
<div class="a" style="left:102.0px;top:798.5px;width:27.5px;height:27.5px;background:#fff;border:2px solid #d9d9d9;border-radius:5px"></div>
<div class="t" style="left:22.0px;top:800.5px;font-size:24px;color:#606266">5</div>
<div class="t" style="left:212.0px;top:800.5px;font-size:24px;color:#606266">2</div>
<div class="t" style="left:573.0px;top:800.5px;font-size:24px;color:#606266">打印机采购邀标</div>
<div class="t" style="left:933.0px;top:800.5px;font-size:24px;color:#606266">询价阶段</div>
<div class="t" style="left:1164.0px;top:800.5px;font-size:24px;color:#606266;letter-spacing:0.5px">XQH-00005</div>
<div class="t" style="left:1448.0px;top:800.5px;font-size:24px;color:#606266;letter-spacing:0.5px">2022063000005</div>
<div class="t" style="left:1734.0px;top:800.5px;font-size:24px;color:#606266;letter-spacing:0.5px">CP-00003</div>
<div class="t" style="left:1961.0px;top:800.5px;font-size:24px;color:#606266">惠普打印机</div>
<div class="t" style="left:2146.0px;top:800.5px;font-size:24px;color:#606266;letter-spacing:0.5px">HP-117</div>
<div class="t" style="left:2328.0px;top:800.5px;font-size:24px;color:#606266">1</div>
<div class="a" style="left:102.0px;top:882.5px;width:27.5px;height:27.5px;background:#fff;border:2px solid #d9d9d9;border-radius:5px"></div>
<div class="t" style="left:22.0px;top:884.5px;font-size:24px;color:#606266">6</div>
<div class="t" style="left:212.0px;top:884.5px;font-size:24px;color:#606266">1</div>
<div class="t" style="left:573.0px;top:884.5px;font-size:24px;color:#606266">电脑采购邀标</div>
<div class="t" style="left:933.0px;top:884.5px;font-size:24px;color:#606266">询价阶段</div>
<div class="t" style="left:1164.0px;top:884.5px;font-size:24px;color:#606266;letter-spacing:0.5px">XQH-00003</div>
<div class="t" style="left:1448.0px;top:884.5px;font-size:24px;color:#606266;letter-spacing:0.5px">2022063000002</div>
<div class="t" style="left:1734.0px;top:884.5px;font-size:24px;color:#606266;letter-spacing:0.5px">CP-00002</div>
<div class="t" style="left:1961.0px;top:884.5px;font-size:24px;color:#606266">电脑</div>
<div class="t" style="left:2146.0px;top:884.5px;font-size:24px;color:#606266;letter-spacing:0.5px">MacBook</div>
<div class="t" style="left:2328.0px;top:884.5px;font-size:24px;color:#606266">2</div>
<div class="a" style="left:2.0px;top:1194.0px;width:2336.0px;height:2.0px;background:#ebecf0"></div>
<div class="a" style="left:2.0px;top:1196.0px;width:2336.0px;height:30.0px;background:#fafafa"></div>
<div class="a" style="left:8.0px;top:1204.5px;width:966.0px;height:15.0px;background:#c1c1c1;border-radius:8px"></div>
<div class="a" style="left:2.0px;top:1225.0px;width:2336.0px;height:2.0px;background:#ebecf0"></div>
<div class="t" style="left:12.0px;top:1265.0px;font-size:24px;color:#555;word-spacing:3.5px">共 6 条</div>
<div class="a" style="left:122.0px;top:1250.5px;width:199.0px;height:54.5px;background:#fff;border:2px solid #e0e0e0;border-radius:6px"></div>
<div class="t" style="left:157.0px;top:1265.0px;font-size:24px;color:#555;letter-spacing:2px">20条/页</div>
<svg style="left:286.0px;top:1270.0px" width="19" height="12" viewBox="0 0 19 12"><path d="M1.5 1.5 L9.5 9.5 L17.5 1.5" fill="none" stroke="#bbb" stroke-width="1.8"/></svg>
<svg style="left:373.0px;top:1267.0px" width="16" height="22" viewBox="0 0 16 22"><path d="M12.5 2 L3 11 L12.5 20" fill="none" stroke="#bdbdbd" stroke-width="1.8"/></svg>
<div class="t" style="left:450.0px;top:1265.0px;font-size:24px;font-weight:bold;color:#3a8ee6">1</div>
<svg style="left:527.0px;top:1267.0px" width="16" height="22" viewBox="0 0 16 22"><path d="M3.5 2 L13 11 L3.5 20" fill="none" stroke="#bdbdbd" stroke-width="1.8"/></svg></div>
<div class="a" style="left:510px;top:218px;width:2340px;height:1328px;border:2px solid #eeeff4"></div>
<!-- widgets -->
<div class="a" style="left:2641px;top:1379px;width:77px;height:77px;border-radius:14px 14px 0 0;background:linear-gradient(160deg,#22cf8c,#0fa86a);box-shadow:0 6px 40px rgba(0,0,0,0.18)"></div>
<svg style="left:2641px;top:1379px" width="77" height="77" viewBox="0 0 77 77">
 <path d="M22 23 H50 V38 H30 L26 42 V38 H22 Z" fill="none" stroke="#fff" stroke-width="3.5"/>
 <circle cx="30" cy="30.5" r="2" fill="#fff"/><circle cx="36" cy="30.5" r="2" fill="#fff"/><circle cx="42" cy="30.5" r="2" fill="#fff"/>
 <path d="M50 28 H57 V48 H52 M4 48 H68" fill="none" stroke="#fff" stroke-width="3.5"/>
 <rect x="8" y="52" width="36" height="17" fill="none" stroke="#fff" stroke-width="3.5"/>
 <rect x="50" y="52" width="18" height="22" fill="none" stroke="#fff" stroke-width="3.5"/>
</svg>
<div class="a" style="left:2673px;top:1361px;width:66px;height:34px;border-radius:17px;background:#ee6b6b;border:3px solid #fff"></div>
<div class="t" style="left:2686px;top:1368px;font-size:24px;color:#fff;letter-spacing:1px;-webkit-text-stroke:0.7px #fff">155</div>
<div class="a" style="left:2753px;top:1379px;width:78px;height:77px;border-radius:16px;background:#fff;border:2px solid #ececec"></div>
<svg style="left:2772px;top:1398px" width="40" height="40" viewBox="0 0 40 40">
 <rect x="3.5" y="3.5" width="13" height="13" rx="2.5" fill="none" stroke="#0a4fc7" stroke-width="3.4"/>
 <rect x="23.5" y="3.5" width="13" height="13" rx="2.5" fill="none" stroke="#0a4fc7" stroke-width="3.4"/>
 <rect x="3.5" y="23.5" width="13" height="13" rx="2.5" fill="none" stroke="#0a4fc7" stroke-width="3.4"/>
 <rect x="23.5" y="23.5" width="13" height="13" rx="2.5" fill="none" stroke="#0a4fc7" stroke-width="3.4"/>
</svg>
<!-- watermark -->
<div class="t" style="left:2270px;top:1422px;font-size:80px;letter-spacing:14px;color:rgba(0,0,0,0.33);-webkit-text-stroke:0.8px rgba(0,0,0,0.33)">知乎</div>
<div class="t" style="left:2479px;top:1422px;font-size:80px;letter-spacing:2px;color:rgba(0,0,0,0.33);-webkit-text-stroke:0.8px rgba(0,0,0,0.33)">@速融云</div>
<div class="t" style="left:2263px;top:1415px;font-size:80px;letter-spacing:14px;color:#fff;-webkit-text-stroke:1px #fff">知乎</div>
<div class="t" style="left:2472px;top:1415px;font-size:80px;letter-spacing:2px;color:#fff;-webkit-text-stroke:1px #fff">@速融云</div>

</body></html>
